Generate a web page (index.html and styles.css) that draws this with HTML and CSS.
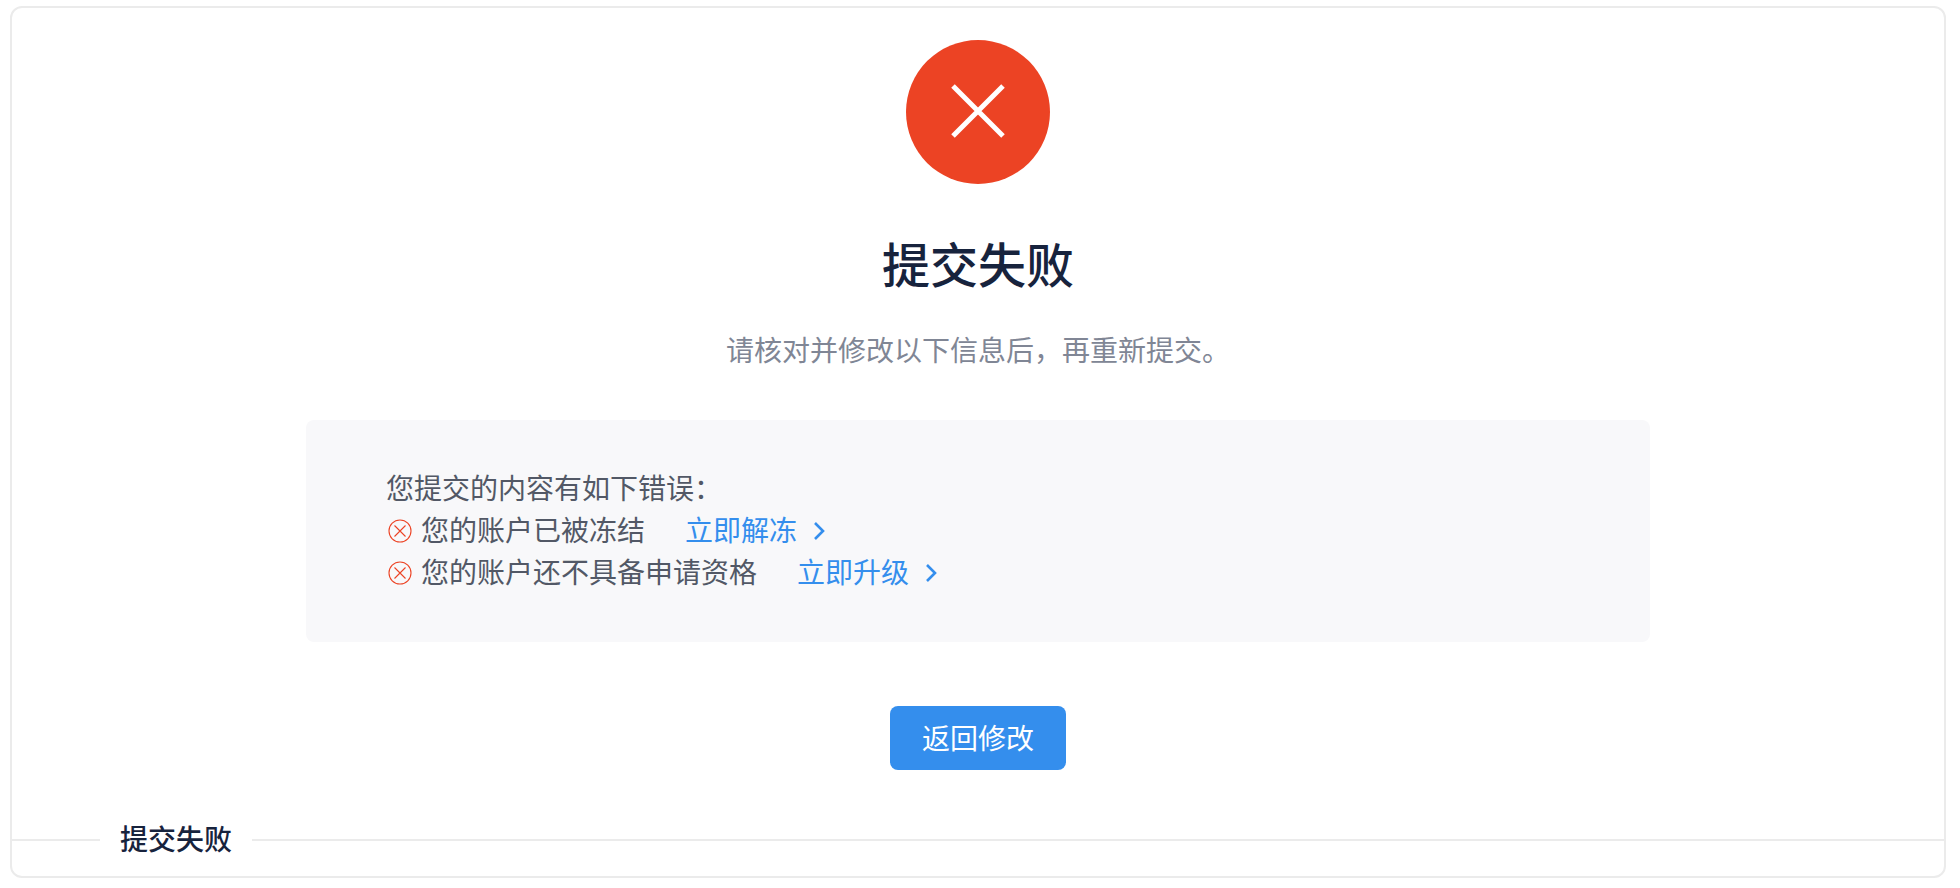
FILE: index.html
```html
<!DOCTYPE html>
<html lang="zh-CN">
<head>
<meta charset="utf-8">
<meta name="viewport" content="width=device-width, initial-scale=1">
<title>提交失败</title>
<link rel="stylesheet" href="styles.css">
</head>
<body>
<section class="demo-card">
  <main class="result">
    <svg class="result-icon" viewBox="0 0 144 144" aria-hidden="true">
      <circle cx="72" cy="72" r="72" fill="#ec4324"/>
      <path d="M47 46L97 96M97 46L47 96" fill="none" stroke="#fff" stroke-width="5"/>
    </svg>
    <h1 class="result-title">提交失败</h1>
    <p class="result-subtitle">请核对并修改以下信息后，再重新提交。</p>
    <div class="result-detail">
      <p class="detail-text">您提交的内容有如下错误：</p>
      <ul class="error-list">
        <li class="error-item">
          <svg class="error-icon" viewBox="0 0 28 28" aria-hidden="true"><circle cx="14" cy="14" r="11"/><path d="M8.5 8.5L19.5 19.5M19.5 8.5L8.5 19.5"/></svg>
          <span class="detail-text">您的账户已被冻结</span>
          <a class="error-link" href="#unfreeze"><span class="detail-text">立即解冻</span><svg class="chevron" viewBox="0 0 28 28" aria-hidden="true"><path d="M10 6L18 14L10 22"/></svg></a>
        </li>
        <li class="error-item">
          <svg class="error-icon" viewBox="0 0 28 28" aria-hidden="true"><circle cx="14" cy="14" r="11"/><path d="M8.5 8.5L19.5 19.5M19.5 8.5L8.5 19.5"/></svg>
          <span class="detail-text">您的账户还不具备申请资格</span>
          <a class="error-link" href="#upgrade"><span class="detail-text">立即升级</span><svg class="chevron" viewBox="0 0 28 28" aria-hidden="true"><path d="M10 6L18 14L10 22"/></svg></a>
        </li>
      </ul>
    </div>
    <button class="button-primary" type="button">返回修改</button>
  </main>
  <h2 class="demo-title"><span class="demo-title-text">提交失败</span></h2>
</section>
</body>
</html>
```
FILE: styles.css
```css
* {
  box-sizing: border-box;
}

body {
  margin: 0;
  padding: 6px 14px 10px 10px;
  background: #fff;
  color: #525866;
  font: 28px/42px "Noto Sans CJK SC", sans-serif;
}

h1, h2, p, ul {
  margin: 0;
  padding: 0;
}

.demo-card {
  padding-bottom: 14px;
  border: 2px solid #ebebeb;
  border-radius: 12px;
}

.result {
  display: flex;
  flex-direction: column;
  align-items: center;
  padding: 32px 64px 48px;
}

.result-icon {
  width: 144px;
  height: 144px;
}

.result-title {
  margin-top: 42px;
  color: #17233d;
  font-size: 48px;
  font-weight: 500;
  line-height: 72px;
}

.result-subtitle {
  margin-top: 30px;
  padding-bottom: 2px;
  color: #808695;
  line-height: 42px;
}

.result-detail {
  width: 100%;
  max-width: 1344px;
  margin-top: 48px;
  padding: 48px 80px;
  border-radius: 8px;
  background: #f8f8fa;
}

.detail-text {
  padding-bottom: 4px;
  line-height: 38px;
}

.error-list {
  list-style: none;
}

.error-item {
  display: flex;
  align-items: center;
}

.error-icon {
  width: 28px;
  height: 28px;
  margin-right: 7px;
  fill: none;
  stroke: #ec4324;
  stroke-width: 1.1;
}

.error-link {
  display: flex;
  align-items: center;
  gap: 8px;
  margin-left: 40px;
  color: #348eed;
  text-decoration: none;
}

.chevron {
  width: 28px;
  height: 28px;
  fill: none;
  stroke: currentColor;
  stroke-width: 2.6;
}

.button-primary {
  margin-top: 64px;
  padding: 0 32px 2px;
  border: 0;
  border-radius: 8px;
  background: #348eed;
  color: #fff;
  font: inherit;
  line-height: 62px;
  cursor: pointer;
}

.demo-title {
  display: flex;
  align-items: center;
  gap: 20px;
  color: #17233d;
  font-size: 28px;
  font-weight: 500;
}

.demo-title-text {
  padding-bottom: 4px;
  line-height: 40px;
}

.demo-title::before,
.demo-title::after {
  content: "";
  height: 2px;
  background: #ebebeb;
}

.demo-title::before {
  width: 88px;
}

.demo-title::after {
  flex: 1;
}
```
